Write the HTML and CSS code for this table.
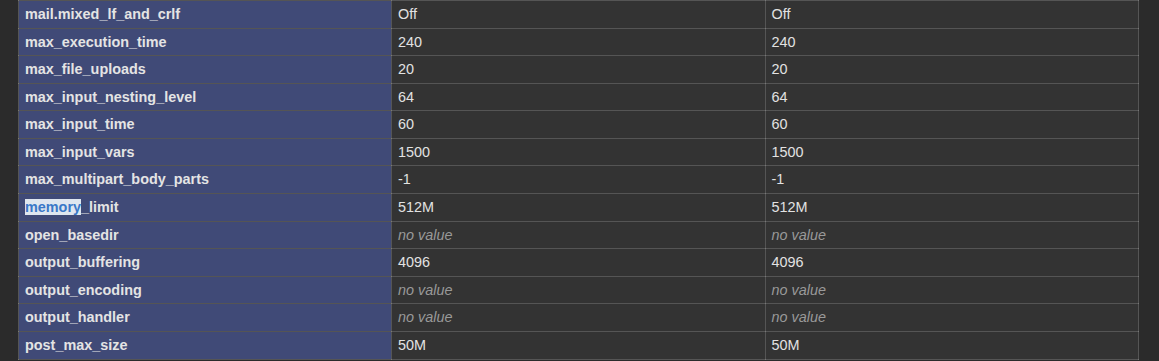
FILE: index.html
```html
<!DOCTYPE html>
<html>
<head>
<meta charset="utf-8">
<link rel="stylesheet" href="styles.css">
</head>
<body>
<div class="page">
<table class="info">
<tr><td class="e">mail.mixed_lf_and_crlf</td><td class="v">Off</td><td class="v">Off</td></tr>
<tr><td class="e">max_execution_time</td><td class="v">240</td><td class="v">240</td></tr>
<tr><td class="e">max_file_uploads</td><td class="v">20</td><td class="v">20</td></tr>
<tr><td class="e">max_input_nesting_level</td><td class="v">64</td><td class="v">64</td></tr>
<tr><td class="e">max_input_time</td><td class="v">60</td><td class="v">60</td></tr>
<tr><td class="e">max_input_vars</td><td class="v">1500</td><td class="v">1500</td></tr>
<tr><td class="e">max_multipart_body_parts</td><td class="v">-1</td><td class="v">-1</td></tr>
<tr><td class="e"><span class="sel">memory</span>_limit</td><td class="v">512M</td><td class="v">512M</td></tr>
<tr><td class="e">open_basedir</td><td class="v"><i>no value</i></td><td class="v"><i>no value</i></td></tr>
<tr><td class="e">output_buffering</td><td class="v">4096</td><td class="v">4096</td></tr>
<tr><td class="e">output_encoding</td><td class="v"><i>no value</i></td><td class="v"><i>no value</i></td></tr>
<tr><td class="e">output_handler</td><td class="v"><i>no value</i></td><td class="v"><i>no value</i></td></tr>
<tr><td class="e">post_max_size</td><td class="v">50M</td><td class="v">50M</td></tr>
</table>
</div>
</body>
</html>
```

FILE: styles.css
```css
html, body {
  margin: 0;
  padding: 0;
  background: #2b2b2b;
  font-family: "Liberation Sans", Arial, sans-serif;
  color: #ddd;
  overflow: hidden;
}
.page {
  padding: 0 0 0 18px;
}
.info {
  border-collapse: collapse;
  width: 1121px;
  table-layout: fixed;
}
.info td {
  border: 1px solid rgba(255, 255, 255, 0.2);
  font-size: 14.4px;
  line-height: 16.58px;
  padding: 5px 6px;
  vertical-align: baseline;
  white-space: nowrap;
  overflow: hidden;
}
.e {
  width: 360px;
  background: #404a77;
  font-weight: bold;
  color: #e4e4e4;
}
.v {
  background: #333;
  color: #e2e2e2;
}
.v i {
  color: #999;
}
.sel {
  background: #dfe6ef;
  color: #3a78c8;
}
```
